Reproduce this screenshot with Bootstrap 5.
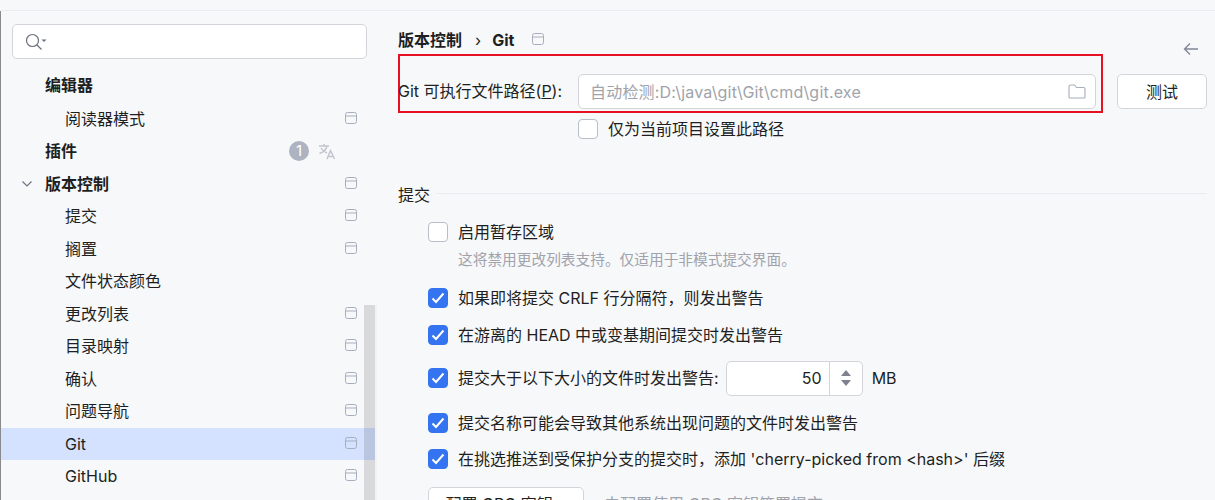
<!DOCTYPE html>
<html lang="zh">
<head>
<meta charset="utf-8">
<title>Git</title>
<link rel="stylesheet" href="https://cdn.jsdelivr.net/npm/bootstrap@5.3.0/dist/css/bootstrap.min.css">
<style>
html,body{height:500px;overflow:hidden}
body{background:#f7f8fa;font-family:"Inter","Noto Sans CJK SC",sans-serif;font-size:16px;color:#1e1f22}
.topstrip{height:11px;border-bottom:1px solid #ebecf0;margin-left:1px}
.shell{height:489px;border-left:1px solid #8a8a8a;overflow:hidden}
.sidebar{width:376px;flex:none;position:relative;background:#f7f8fa}
.rightpane{width:838px;flex:none}
.searchbox{margin:13px 10px 0 11px;height:35px;background:#fff;border:1px solid #d3d5db;border-radius:5px;padding-left:12px}
.treelist{margin-top:11px}
.firstitem{margin-top:-1px;margin-bottom:1px}
.treeitem{height:32.5px;line-height:32px;padding-right:20px}
.treeitem.selected{background:#d4e2ff}
.lvl1{padding-left:44px;font-weight:700}
.lvl2{padding-left:64px}
.chev{position:absolute;left:20px;top:12px}
.stateicon{width:12px;height:12px;margin-top:-2px}
.sbar{position:absolute;left:363px;top:294px;width:13px;height:195px;background:rgba(0,0,0,.12);border-right:2px solid #f2f2f2}
.numdot{width:20px;height:20px;border-radius:50%;background:#aeb3c1;color:#fff;font-size:15px;font-weight:400;line-height:20px;text-align:center;margin-right:9px}
.translateicon{margin-right:21px}
.crumb{padding-top:14px;height:43px;padding-left:21px;padding-right:16px}
.crumb b{font-weight:700}
.crumbsep{margin:0 11px 0 13px}
.crumbicon{margin-left:18px}
.backarrow{margin-top:18px}
.pathrow{align-items:flex-start}
.pathbox{margin-left:21px;width:705px;height:59px;border:2px solid #e81123;padding:18px 5px 0 0}
.pathbox label{width:178px;margin-left:-2px;padding-right:0;flex:none;white-space:nowrap;line-height:35px}
.pathfield{width:520px;margin-left:2px;height:35px;background:#fff;border:1px solid #d3d5db;border-radius:5px;padding:0 9px 0 11px;color:#a0a3ab;letter-spacing:.2px}
.plainbtn{background:#fff;border:1px solid #d3d5db;border-radius:5px;height:35px;color:#1e1f22;font-size:16px;padding:0}
.testbtn{width:90px;margin:20px 0 0 14px}
.cb{width:20px;height:20px;flex:none;border-radius:4px;display:flex;align-items:center;justify-content:center;background:#fff;border:1px solid #b9bdc9}
.cb.on{background:#3574f0;border-color:#3574f0}
.onlypath{margin:2px 0 0 201px;height:28px}
.sectionhead{margin:40px 0 0 21px;height:24px}
.sectionhead::after{content:"";flex:1;height:1px;background:#ebecf0;margin-left:6px;margin-right:8px;margin-top:-3px}
.optarea{padding-left:51px}
.opt{height:36.5px}
.firstopt{margin-top:7px}
.optlabel{margin-left:10px;white-space:nowrap}
.hintline{color:#a0a3ab;font-size:14.7px;padding-left:30px;height:22px;line-height:18px;margin-bottom:7.5px}
.optlarge{height:44px;margin-top:3px;margin-bottom:4.5px}
.spin{width:137px;height:35px;background:#fff;border:1px solid #d3d5db;border-radius:5px;margin-left:7px}
.spinval{flex:1;text-align:right;padding-right:7px}
.spinarrows{width:33px;height:100%;border-left:1px solid #d3d5db}
.mbunit{margin-left:9px}
.muted2{color:#a0a3ab}
.gpgrow{margin-top:9px}
.gpgbtn{width:156px;margin-right:20px}
</style>
</head>
<body>
<div class="topstrip"></div>
<div class="shell d-flex">
  <div class="sidebar">
    <div class="searchbox d-flex align-items-center">
      <svg width="24" height="18" viewBox="0 0 24 18" fill="none" stroke="#6c707e" stroke-width="1.2"><circle cx="7.5" cy="7.500" r="6"/><path d="M12 12l4.500 4.500"/><path d="M16.500 6.500h5l-2.500 2.500z" fill="#6c707e" stroke="none"/></svg>
    </div>
    <div class="treelist">
      <div class="treeitem lvl1 firstitem">编辑器</div>
      <div class="treeitem lvl2 d-flex justify-content-between align-items-center"><span>阅读器模式</span><svg class="stateicon" viewBox="0 0 12 12" fill="none" stroke="#a8adbd"><rect x=".5" y=".5" width="11" height="11" rx="2"/><path d="M.5 4h11"/></svg></div>
      <div class="treeitem lvl1 d-flex align-items-center"><span class="flex-grow-1">插件</span><span class="numdot">1</span><svg class="translateicon" width="18" height="17" viewBox="0 0 18 17" fill="none" stroke="#c2c5cf" stroke-width="1.500"><path d="M1 3h10M6 1v2M9 3c-.7 3.500-3.500 6-7.500 7.500M3 5c1 2 3.500 4 6 5M9 16l3.500-8.500L16.500 16M10.200 13.500h5"/></svg></div>
      <div class="treeitem lvl1 d-flex justify-content-between align-items-center position-relative"><svg class="chev" width="12" height="8" viewBox="0 0 12 8" fill="none" stroke="#6c707e" stroke-width="1.100"><path d="M1.500 1.500L6 6l4.500-4.500"/></svg><span>版本控制</span><svg class="stateicon" viewBox="0 0 12 12" fill="none" stroke="#a8adbd"><rect x=".5" y=".5" width="11" height="11" rx="2"/><path d="M.5 4h11"/></svg></div>
      <div class="treeitem lvl2 d-flex justify-content-between align-items-center"><span>提交</span><svg class="stateicon" viewBox="0 0 12 12" fill="none" stroke="#a8adbd"><rect x=".5" y=".5" width="11" height="11" rx="2"/><path d="M.5 4h11"/></svg></div>
      <div class="treeitem lvl2 d-flex justify-content-between align-items-center"><span>搁置</span><svg class="stateicon" viewBox="0 0 12 12" fill="none" stroke="#a8adbd"><rect x=".5" y=".5" width="11" height="11" rx="2"/><path d="M.5 4h11"/></svg></div>
      <div class="treeitem lvl2">文件状态颜色</div>
      <div class="treeitem lvl2 d-flex justify-content-between align-items-center"><span>更改列表</span><svg class="stateicon" viewBox="0 0 12 12" fill="none" stroke="#a8adbd"><rect x=".5" y=".5" width="11" height="11" rx="2"/><path d="M.5 4h11"/></svg></div>
      <div class="treeitem lvl2 d-flex justify-content-between align-items-center"><span>目录映射</span><svg class="stateicon" viewBox="0 0 12 12" fill="none" stroke="#a8adbd"><rect x=".5" y=".5" width="11" height="11" rx="2"/><path d="M.5 4h11"/></svg></div>
      <div class="treeitem lvl2 d-flex justify-content-between align-items-center"><span>确认</span><svg class="stateicon" viewBox="0 0 12 12" fill="none" stroke="#a8adbd"><rect x=".5" y=".5" width="11" height="11" rx="2"/><path d="M.5 4h11"/></svg></div>
      <div class="treeitem lvl2 d-flex justify-content-between align-items-center"><span>问题导航</span><svg class="stateicon" viewBox="0 0 12 12" fill="none" stroke="#a8adbd"><rect x=".5" y=".5" width="11" height="11" rx="2"/><path d="M.5 4h11"/></svg></div>
      <div class="treeitem lvl2 selected d-flex justify-content-between align-items-center"><span>Git</span><svg class="stateicon" viewBox="0 0 12 12" fill="none" stroke="#a8adbd"><rect x=".5" y=".5" width="11" height="11" rx="2"/><path d="M.5 4h11"/></svg></div>
      <div class="treeitem lvl2 d-flex justify-content-between align-items-center"><span>GitHub</span><svg class="stateicon" viewBox="0 0 12 12" fill="none" stroke="#a8adbd"><rect x=".5" y=".5" width="11" height="11" rx="2"/><path d="M.5 4h11"/></svg></div>
    </div>
    <div class="sbar"></div>
  </div>
  <div class="rightpane">
    <div class="crumb d-flex align-items-center">
      <b>版本控制</b><span class="crumbsep">›</span><b>Git</b>
      <svg class="stateicon crumbicon" viewBox="0 0 12 12" fill="none" stroke="#a8adbd"><rect x=".5" y=".5" width="11" height="11" rx="2"/><path d="M.5 4h11"/></svg>
      <svg class="ms-auto backarrow" width="16" height="14" viewBox="0 0 16 14" fill="none" stroke="#818594" stroke-width="1.300"><path d="M15 7H1.500M7 1.500L1.500 7 7 12.500"/></svg>
    </div>
    <div class="d-flex pathrow">
      <div class="pathbox d-flex">
        <label>Git 可执行文件路径(<u>P</u>):</label>
        <div class="pathfield d-flex align-items-center justify-content-between">
          <span>自动检测:D:\java\git\Git\cmd\git.exe</span>
          <svg width="18" height="15" viewBox="0 0 18 15" fill="none" stroke="#a8adbd" stroke-width="1.100"><path d="M1 13V2.500C1 1.700 1.700 1 2.500 1h4L8.500 3.500h7c.8 0 1.500.7 1.500 1.500v8c0 .5-.5 1-1 1H2c-.5 0-1-.5-1-1z"/></svg>
        </div>
      </div>
      <button type="button" class="btn plainbtn testbtn">测试</button>
    </div>
    <div class="onlypath d-flex align-items-center"><span class="cb"></span><span class="optlabel">仅为当前项目设置此路径</span></div>
    <div class="sectionhead d-flex align-items-center">提交</div>
    <div class="optarea">
      <div class="d-flex align-items-center opt firstopt"><span class="cb"></span><span class="optlabel">启用暂存区域</span></div>
      <div class="hintline">这将禁用更改列表支持。仅适用于非模式提交界面。</div>
      <div class="d-flex align-items-center opt"><span class="cb on"><svg width="14" height="12" viewBox="0 0 14 12" fill="none" stroke="#fff" stroke-width="2"><path d="M1.500 6.500l3.500 3.500 7.500-8.500"/></svg></span><span class="optlabel">如果即将提交 CRLF 行分隔符，则发出警告</span></div>
      <div class="d-flex align-items-center opt"><span class="cb on"><svg width="14" height="12" viewBox="0 0 14 12" fill="none" stroke="#fff" stroke-width="2"><path d="M1.500 6.500l3.500 3.500 7.500-8.500"/></svg></span><span class="optlabel">在游离的 HEAD 中或变基期间提交时发出警告</span></div>
      <div class="d-flex align-items-center optlarge"><span class="cb on"><svg width="14" height="12" viewBox="0 0 14 12" fill="none" stroke="#fff" stroke-width="2"><path d="M1.500 6.500l3.500 3.500 7.500-8.500"/></svg></span><span class="optlabel">提交大于以下大小的文件时发出警告:</span>
        <div class="spin d-flex align-items-center"><span class="spinval">50</span><span class="spinarrows d-flex align-items-center justify-content-center"><svg width="12" height="18" viewBox="0 0 12 18" fill="#7d8190"><path d="M6 1l5 6H1zM6 17l-5-6h10z"/></svg></span></div>
        <span class="mbunit">MB</span></div>
      <div class="d-flex align-items-center opt"><span class="cb on"><svg width="14" height="12" viewBox="0 0 14 12" fill="none" stroke="#fff" stroke-width="2"><path d="M1.500 6.500l3.500 3.500 7.500-8.500"/></svg></span><span class="optlabel">提交名称可能会导致其他系统出现问题的文件时发出警告</span></div>
      <div class="d-flex align-items-center opt"><span class="cb on"><svg width="14" height="12" viewBox="0 0 14 12" fill="none" stroke="#fff" stroke-width="2"><path d="M1.500 6.500l3.500 3.500 7.500-8.500"/></svg></span><span class="optlabel">在挑选推送到受保护分支的提交时，添加 'cherry-picked from &lt;hash&gt;' 后缀</span></div>
      <div class="d-flex align-items-center gpgrow"><button type="button" class="btn plainbtn gpgbtn">配置 GPG 密钥...</button><span class="muted2">未配置使用 GPG 密钥签署提交</span></div>
    </div>
  </div>
</div>
</body>
</html>
